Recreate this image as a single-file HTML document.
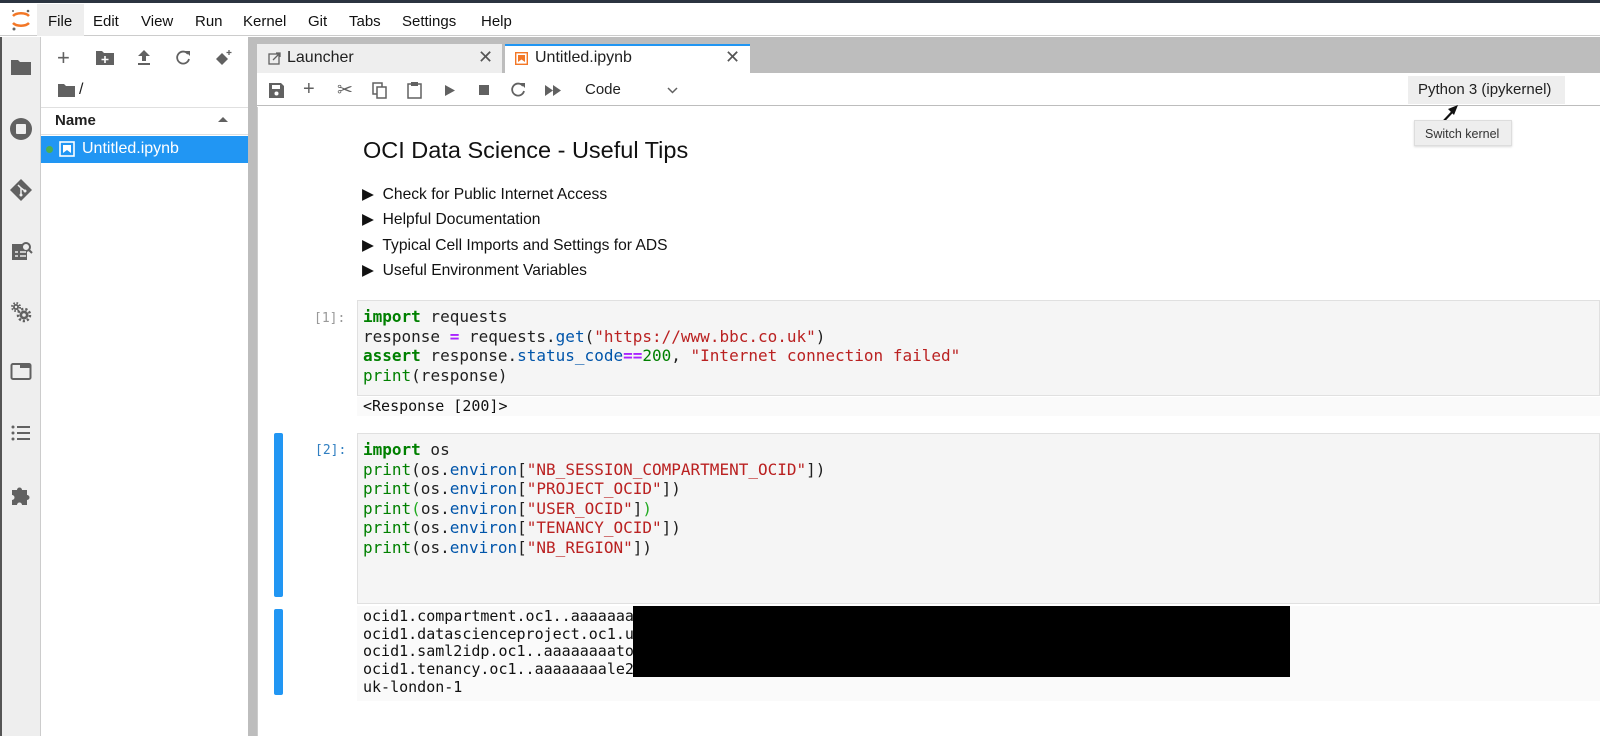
<!DOCTYPE html>
<html><head><meta charset="utf-8"><style>
*{box-sizing:border-box;margin:0;padding:0}
body{width:1600px;height:736px;overflow:hidden;background:#fff;font-family:"Liberation Sans",Arial,sans-serif;color:#212121;position:relative}
.abs{position:absolute}
.mono{font-family:"DejaVu Sans Mono","Liberation Mono",monospace}
.menu span{position:absolute;top:13px;font-size:15px;color:#111}
.ic{position:absolute}
.code{font-size:16px;line-height:19.5px;white-space:pre;color:#212121}
.k{color:#008000;font-weight:bold}.s{color:#ba2121}.f{color:#008000}.a{color:#0055aa}.o{color:#aa22ff;font-weight:bold}.n{color:#008000}
.out{font-size:15px;line-height:17.7px;white-space:pre;color:#111}
</style></head><body>
<div class="abs" style="left:0;top:0;width:1600px;height:3px;background:#2b3440"></div>
<div class="abs" style="left:0;top:3px;width:1600px;height:33px;background:#fff;border-bottom:1px solid #ccc"></div>
<div class="abs" style="left:37px;top:4px;width:47px;height:32px;background:#eee"></div>
<svg class="ic" style="left:9px;top:7px" width="24" height="26" viewBox="0 0 24 26"><path d="M4 9 A9 5 0 0 1 20 9" stroke="#f37726" stroke-width="2.5" fill="none"/><path d="M4 16 A9 5 0 0 0 20 16" stroke="#f37726" stroke-width="2.5" fill="none"/><circle cx="19" cy="4" r="1.3" fill="#666"/><circle cx="5" cy="22" r="1.5" fill="#666"/><circle cx="4" cy="4" r="1" fill="#666"/></svg>
<div class="menu"><span style="left:48px">File</span><span style="left:93px">Edit</span><span style="left:141px">View</span><span style="left:195px">Run</span><span style="left:243px">Kernel</span><span style="left:308px">Git</span><span style="left:349px">Tabs</span><span style="left:402px">Settings</span><span style="left:481px">Help</span></div>
<!-- left bar -->
<div class="abs" style="left:0;top:37px;width:41px;height:699px;background:#eee;border-right:1px solid #ccc;border-left:2px solid #555"></div>
<svg class="ic" style="left:10px;top:58px" width="22" height="18" viewBox="0 0 22 18"><path d="M1 2h7l2 2h11v13H1z" fill="#616161"/></svg>
<svg class="ic" style="left:9px;top:117px" width="24" height="24"><circle cx="12" cy="12" r="11" fill="#616161"/><rect x="7" y="7" width="10" height="10" rx="1" fill="#eee"/></svg>
<svg class="ic" style="left:9px;top:178px" width="24" height="24" viewBox="0 0 24 24"><path d="M12 1 23 12 12 23 1 12z" fill="#616161"/><path d="M9 7 12 10v7M12 10l4 3" stroke="#eee" stroke-width="1.5" fill="none"/><circle cx="12" cy="17" r="1.5" fill="#eee"/><circle cx="16" cy="13" r="1.5" fill="#eee"/></svg>
<svg class="ic" style="left:11px;top:240px" width="22" height="22" viewBox="0 0 22 22"><rect x="1" y="4" width="15" height="16" fill="#616161"/><circle cx="15" cy="7" r="4" fill="#eee" stroke="#616161" stroke-width="2"/><path d="M18 10l3 3" stroke="#616161" stroke-width="2"/><path d="M4 12h3M9 12h6M4 16h3M9 16h6" stroke="#eee" stroke-width="1.5"/></svg>
<svg class="ic" style="left:10px;top:301px" width="22" height="22" viewBox="0 0 22 22"><circle cx="6" cy="6" r="3" fill="#616161"/><circle cx="6" cy="6" r="4" fill="none" stroke="#616161" stroke-width="2" stroke-dasharray="1.6 1.6"/><circle cx="6" cy="6" r="1.2" fill="#eee"/><circle cx="14" cy="14" r="4.5" fill="#616161"/><circle cx="14" cy="14" r="6" fill="none" stroke="#616161" stroke-width="2.5" stroke-dasharray="2.2 2"/><circle cx="14" cy="14" r="1.8" fill="#eee"/></svg>
<svg class="ic" style="left:10px;top:362px" width="22" height="20"><rect x="1.5" y="2" width="19" height="15" rx="1.5" fill="none" stroke="#616161" stroke-width="2"/><rect x="10" y="2" width="10" height="4" fill="#616161"/></svg>
<svg class="ic" style="left:11px;top:424px" width="20" height="18"><g fill="#616161"><circle cx="2" cy="3" r="1.5"/><circle cx="2" cy="9" r="1.5"/><circle cx="2" cy="15" r="1.5"/><rect x="6" y="2" width="13" height="2"/><rect x="6" y="8" width="13" height="2"/><rect x="6" y="14" width="13" height="2"/></g></svg>
<svg class="ic" style="left:10px;top:484px" width="22" height="22" viewBox="0 0 22 22"><path d="M2 6h5a2.5 2.5 0 1 1 5 0h5v5a2.5 2.5 0 1 1 0 5v5H12a2.5 2.5 0 1 0-5 0H2v-5a2.5 2.5 0 1 0 0-5z" fill="#616161"/></svg>
<!-- file browser -->
<div class="abs" style="left:41px;top:37px;width:207px;height:699px;background:#fff"></div>
<div class="abs" style="left:57px;top:45px;font-size:22px;color:#616161">+</div>
<svg class="ic" style="left:96px;top:50px" width="18" height="15"><path d="M0 1h6l2 2h10v12H0z" fill="#616161"/><path d="M9 6v7M5.5 9.5h7" stroke="#fff" stroke-width="1.6"/></svg>
<svg class="ic" style="left:137px;top:50px" width="14" height="15"><path d="M7 0 13 6H9v5H5V6H1z M1 13h12v2H1z" fill="#616161"/></svg>
<svg class="ic" style="left:176px;top:50px" width="15" height="15"><path d="M12 4A6 6 0 1 0 13 9" fill="none" stroke="#616161" stroke-width="1.8"/><path d="M9 1h5v5z" fill="#616161"/></svg>
<svg class="ic" style="left:215px;top:49px" width="18" height="18"><path d="M7 4 13 10 7 16 1 10z" fill="#616161"/><path d="M14 1v5M11.5 3.5h5" stroke="#616161" stroke-width="1.3"/></svg>
<svg class="ic" style="left:58px;top:83px" width="17" height="14"><path d="M0 1h6l2 2h9v11H0z" fill="#616161"/></svg>
<div class="abs" style="left:79px;top:81px;font-size:16px">/</div>
<div class="abs" style="left:41px;top:107px;width:207px;height:28px;border-top:1px solid #e0e0e0;border-bottom:1px solid #e0e0e0"></div>
<div class="abs" style="left:55px;top:112px;font-size:15px;font-weight:bold">Name</div>
<div class="abs" style="left:218px;top:117px;width:0;height:0;border-left:5px solid transparent;border-right:5px solid transparent;border-bottom:5px solid #616161"></div>
<div class="abs" style="left:41px;top:136px;width:207px;height:27px;background:#2196f3"></div>
<div class="abs" style="left:46px;top:146px;width:7px;height:7px;border-radius:50%;background:#4caf50"></div>
<svg class="ic" style="left:59px;top:141px" width="16" height="16"><rect x="1" y="1" width="14" height="14" fill="none" stroke="#fff" stroke-width="1.6"/><path d="M4 4h8v8L8 9 4 12z" fill="#fff"/></svg>
<div class="abs" style="left:82px;top:140px;font-size:16px;color:#fff">Untitled.ipynb</div>
<!-- splitter -->
<div class="abs" style="left:248px;top:37px;width:9px;height:699px;background:#bdbdbd"></div>
<!-- tab bar -->
<div class="abs" style="left:257px;top:37px;width:1343px;height:36px;background:#bdbdbd"></div>
<div class="abs" style="left:257px;top:44px;width:246px;height:29px;background:#eee;border-right:1px solid #bdbdbd"></div>
<svg class="ic" style="left:268px;top:52px" width="13" height="13"><rect x="1" y="2" width="10" height="10" fill="none" stroke="#616161" stroke-width="1.3"/><path d="M5 8 12 1M8 1h4v4" stroke="#616161" stroke-width="1.3" fill="none"/></svg>
<div class="abs" style="left:287px;top:49px;font-size:16px">Launcher</div>
<div class="abs" style="left:478px;top:47px;font-size:18px;color:#555">✕</div>
<div class="abs" style="left:505px;top:44px;width:245px;height:30px;background:#fff;border-top:2px solid #2196f3"></div>
<svg class="ic" style="left:515px;top:52px" width="13" height="13"><rect x="0.7" y="0.7" width="11.6" height="11.6" fill="none" stroke="#f37726" stroke-width="1.4"/><path d="M3 3h7v7L6.5 7.5 3 10z" fill="#f37726"/></svg>
<div class="abs" style="left:535px;top:49px;font-size:16px">Untitled.ipynb</div>
<div class="abs" style="left:725px;top:47px;font-size:18px;color:#555">✕</div>
<!-- toolbar -->
<div class="abs" style="left:257px;top:73px;width:1343px;height:33px;background:#fff;border-bottom:1px solid #bdbdbd"></div>
<svg class="ic" style="left:269px;top:83px" width="15" height="15"><path d="M0 0h12l3 3v12H0z" fill="#616161"/><rect x="3" y="2" width="8" height="4" fill="#fff"/><circle cx="7.5" cy="10.5" r="2" fill="#fff"/></svg>
<div class="abs" style="left:303px;top:78px;font-size:20px;color:#616161">+</div>
<div class="abs" style="left:337px;top:79px;font-size:19px;color:#616161">✂</div>
<svg class="ic" style="left:372px;top:82px" width="16" height="17"><rect x="1" y="1" width="9" height="11" fill="none" stroke="#616161" stroke-width="1.5"/><rect x="5" y="5" width="9" height="11" fill="#fff" stroke="#616161" stroke-width="1.5"/></svg>
<svg class="ic" style="left:407px;top:81px" width="16" height="18"><rect x="1" y="3" width="13" height="14" fill="none" stroke="#616161" stroke-width="1.5"/><rect x="4" y="1" width="7" height="4" fill="#616161"/></svg>
<svg class="ic" style="left:445px;top:85px" width="10" height="11"><path d="M0 0 10 5.5 0 11z" fill="#616161"/></svg>
<div class="abs" style="left:479px;top:85px;width:10px;height:10px;background:#616161"></div>
<svg class="ic" style="left:511px;top:82px" width="15" height="15"><path d="M12 4A6 6 0 1 0 13 9" fill="none" stroke="#616161" stroke-width="1.8"/><path d="M9 1h5v5z" fill="#616161"/></svg>
<svg class="ic" style="left:545px;top:85px" width="16" height="11"><path d="M0 0 8 5.5 0 11zM8 0 16 5.5 8 11z" fill="#616161"/></svg>
<div class="abs" style="left:585px;top:81px;font-size:15px">Code</div>
<svg class="ic" style="left:667px;top:87px" width="11" height="7"><path d="M1 1 5.5 5.5 10 1" stroke="#616161" stroke-width="1.5" fill="none"/></svg>
<div class="abs" style="left:1408px;top:76px;width:157px;height:28px;background:#eee"></div>
<div class="abs" style="left:1418px;top:81px;font-size:15px">Python 3 (ipykernel)</div>
<svg class="ic" style="left:1438px;top:103px" width="24" height="24"><path d="M2 22 17 6" stroke="#111" stroke-width="2.2"/><path d="M20 2 10 6 16 12z" fill="#111"/></svg>
<div class="abs" style="left:1414px;top:120px;width:98px;height:26px;background:#eee;border:1px solid #ddd;box-shadow:0 1px 2px rgba(0,0,0,.15);font-size:12.5px;color:#333;padding:6px 0 0 10px">Switch kernel</div>
<!-- markdown -->
<div class="abs" style="left:363px;top:137px;font-size:23.5px;color:#111">OCI Data Science - Useful Tips</div>
<div class="abs" style="left:362px;top:182px;font-size:15.6px;line-height:25.4px;color:#111">▶&nbsp; Check for Public Internet Access<br>▶&nbsp; Helpful Documentation<br>▶&nbsp; Typical Cell Imports and Settings for ADS<br>▶&nbsp; Useful Environment Variables</div>
<div class="abs" style="left:257px;top:107px;width:1px;height:629px;background:#ccc"></div>
<!-- cell 1 -->
<div class="abs mono" style="left:314px;top:311px;font-size:13px;color:#999">[1]:</div>
<div class="abs" style="left:357px;top:300px;width:1243px;height:96px;background:#f5f5f5;border:1px solid #e0e0e0"></div>
<div class="abs mono code" style="left:363px;top:307px"><span class="k">import</span> requests
response <span class="o">=</span> requests.<span class="a">get</span>(<span class="s">"https://www.bbc.co.uk"</span>)
<span class="k">assert</span> response.<span class="a">status_code</span><span class="o">==</span><span class="n">200</span>, <span class="s">"Internet connection failed"</span>
<span class="f">print</span>(response)</div>
<div class="abs" style="left:357px;top:397px;width:1243px;height:19px;background:#fafafa"></div>
<div class="abs mono out" style="left:363px;top:398px">&lt;Response [200]&gt;</div>
<!-- cell 2 -->
<div class="abs" style="left:274px;top:433px;width:9px;height:164px;background:#2196f3;border-radius:2px"></div>
<div class="abs mono" style="left:315px;top:443px;font-size:13px;color:#307fc1">[2]:</div>
<div class="abs" style="left:357px;top:433px;width:1243px;height:171px;background:#f5f5f5;border:1px solid #e0e0e0"></div>
<div class="abs mono code" style="left:363px;top:440px"><span class="k">import</span> os
<span class="f">print</span>(os.<span class="a">environ</span>[<span class="s">"NB_SESSION_COMPARTMENT_OCID"</span>])
<span class="f">print</span>(os.<span class="a">environ</span>[<span class="s">"PROJECT_OCID"</span>])
<span class="f">print</span><span style="color:#2a2">(</span>os.<span class="a">environ</span>[<span class="s">"USER_OCID"</span>]<span style="color:#2a2">)</span>
<span class="f">print</span>(os.<span class="a">environ</span>[<span class="s">"TENANCY_OCID"</span>])
<span class="f">print</span>(os.<span class="a">environ</span>[<span class="s">"NB_REGION"</span>])</div>
<div class="abs" style="left:274px;top:609px;width:9px;height:86px;background:#2196f3;border-radius:2px"></div>
<div class="abs" style="left:357px;top:606px;width:1243px;height:95px;background:#fafafa"></div>
<div class="abs mono out" style="left:363px;top:608px">ocid1.compartment.oc1..aaaaaaa
ocid1.datascienceproject.oc1.u
ocid1.saml2idp.oc1..aaaaaaaato
ocid1.tenancy.oc1..aaaaaaaale2
uk-london-1</div>
<div class="abs" style="left:633px;top:606px;width:657px;height:71px;background:#000"></div>
</body></html>
